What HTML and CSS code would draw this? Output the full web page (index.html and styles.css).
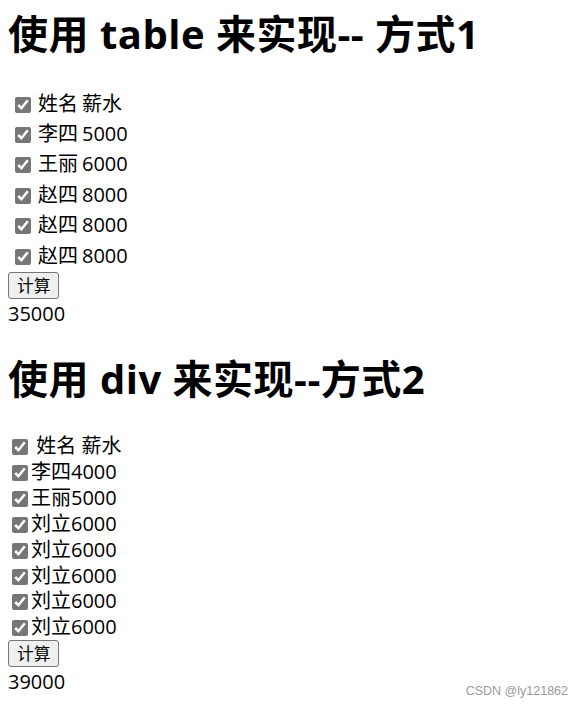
FILE: index.html
```html
<!DOCTYPE html>
<html lang="zh">
<head>
<meta charset="utf-8">
<title>计算</title>
<link rel="stylesheet" href="styles.css">
</head>
<body>
<h1 class="title first">使用 table 来实现-- 方式1</h1>
<table class="tbl">
  <tr><td><input type="checkbox" class="cb" checked></td><td>姓名</td><td>薪水</td></tr>
  <tr><td><input type="checkbox" class="cb" checked></td><td>李四</td><td>5000</td></tr>
  <tr><td><input type="checkbox" class="cb" checked></td><td>王丽</td><td>6000</td></tr>
  <tr><td><input type="checkbox" class="cb" checked></td><td>赵四</td><td>8000</td></tr>
  <tr><td><input type="checkbox" class="cb" checked></td><td>赵四</td><td>8000</td></tr>
  <tr><td><input type="checkbox" class="cb" checked></td><td>赵四</td><td>8000</td></tr>
</table>
<button class="btn">计算</button>
<div class="sum">35000</div>

<h1 class="title second">使用 div 来实现--方式2</h1>
<div class="row"><input type="checkbox" class="cb" checked> 姓名 薪水</div>
<div class="row"><input type="checkbox" class="cb" checked>李四4000</div>
<div class="row"><input type="checkbox" class="cb" checked>王丽5000</div>
<div class="row"><input type="checkbox" class="cb" checked>刘立6000</div>
<div class="row"><input type="checkbox" class="cb" checked>刘立6000</div>
<div class="row"><input type="checkbox" class="cb" checked>刘立6000</div>
<div class="row"><input type="checkbox" class="cb" checked>刘立6000</div>
<div class="row"><input type="checkbox" class="cb" checked>刘立6000</div>
<button class="btn">计算</button>
<div class="sum">39000</div>

<div class="watermark">CSDN @ly121862</div>
</body>
</html>
```

FILE: styles.css
```css
html, body {
  background: #ffffff;
}
body {
  margin: 8px;
  font-family: "Open Sans", "Noto Sans CJK SC", sans-serif;
  font-size: 20px;
  line-height: 26.4px;
  color: #000000;
}
.title {
  font-size: 40px;
  line-height: 52.8px;
  font-weight: bold;
  letter-spacing: 0.5px;
  margin: 26.8px 0;
}
.title.first {
  margin-top: 0;
}
.title.second {
  margin-top: 26px;
}
.tbl {
  border-spacing: 2px;
  border-collapse: separate;
}
.tbl td {
  padding: 1px;
  vertical-align: middle;
}
.cb {
  width: 16px;
  height: 16px;
  margin: 3px 3px 3px 4px;
  vertical-align: -2px;
  accent-color: #767676;
}
.row {
  line-height: 25.9px;
}
.btn {
  font-family: "Open Sans", "Noto Sans CJK SC", sans-serif;
  font-size: 16.67px;
  line-height: 23px;
  padding: 1px 8px;
  border: 1px solid #767676;
  border-radius: 3px;
  background: #efefef;
  color: #000000;
  margin: 0;
  display: block;
}
.sum {
  line-height: 26.4px;
  padding-top: 2px;
}
.watermark {
  position: absolute;
  right: 14px;
  top: 678px;
  font-family: "Liberation Sans", Arial, sans-serif;
  font-size: 12.5px;
  color: #9a9a9a;
}
```
